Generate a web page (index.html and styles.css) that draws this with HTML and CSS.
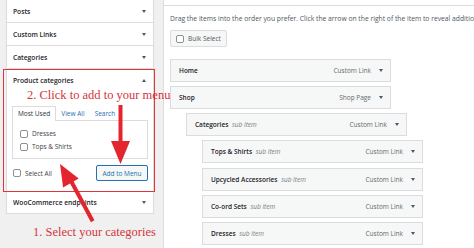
FILE: index.html
```
<!DOCTYPE html>
<html>
<head>
<meta charset="utf-8">
<link rel="stylesheet" href="styles.css">
</head>
<body>
<div class="page">
  <aside class="sidebar">
    <div class="acc-row"><span>Posts</span><i class="caret down"></i></div>
    <div class="acc-row"><span>Custom Links</span><i class="caret down"></i></div>
    <div class="acc-row"><span>Categories</span><i class="caret down"></i></div>
    <section class="acc-open">
      <div class="acc-head"><span>Product categories</span><i class="caret up"></i></div>
      <div class="acc-body">
        <div class="tabs">
          <span class="tab active">Most Used</span>
          <span class="tab link">View All</span>
          <span class="tab link">Search</span>
        </div>
        <div class="tab-panel">
          <label class="check-row"><span class="box"></span>Dresses</label>
          <label class="check-row"><span class="box"></span>Tops &amp; Shirts</label>
        </div>
        <div class="actions">
          <label class="check-row select-all"><span class="box"></span>Select All</label>
          <span class="add-btn">Add to Menu</span>
        </div>
      </div>
    </section>
    <div class="acc-row last"><span>WooCommerce endpoints</span><i class="caret down"></i></div>
  </aside>
  <main class="main">
    <div class="main-head"></div>
    <div class="main-body">
      <p class="hint">Drag the items into the order you prefer. Click the arrow on the right of the item to reveal additional configuration options.</p>
      <span class="bulk"><span class="box"></span>Bulk Select</span>
      <ul class="menu">
        <li class="item"><span class="title">Home</span><span class="meta">Custom Link<i class="caret down"></i></span></li>
        <li class="item"><span class="title">Shop</span><span class="meta">Shop Page<i class="caret down"></i></span></li>
        <li class="item d1"><span class="title">Categories <em>sub item</em></span><span class="meta">Custom Link<i class="caret down"></i></span></li>
        <li class="item d2"><span class="title">Tops &amp; Shirts <em>sub item</em></span><span class="meta">Custom Link<i class="caret down"></i></span></li>
        <li class="item d2"><span class="title">Upcycled Accessories <em>sub item</em></span><span class="meta">Custom Link<i class="caret down"></i></span></li>
        <li class="item d2"><span class="title">Co-ord Sets <em>sub item</em></span><span class="meta">Custom Link<i class="caret down"></i></span></li>
        <li class="item d2"><span class="title">Dresses <em>sub item</em></span><span class="meta">Custom Link<i class="caret down"></i></span></li>
      </ul>
    </div>
  </main>
</div>

<div class="annot annot-2">2. Click to add to your menu</div>
<div class="annot annot-1">1. Select your categories</div>
<svg class="arrows" width="474" height="248" viewBox="0 0 474 248">
  <rect x="118.5" y="105" width="4" height="38" fill="#e3262d"/>
  <polygon points="111,141 130,141 120.5,164" fill="#e3262d"/>
  <line x1="70.5" y1="180" x2="92.7" y2="221.3" stroke="#e3262d" stroke-width="4"/>
  <polygon points="60,164 78.7,178.6 63.1,187.6" fill="#e3262d"/>
</svg>
</body>
</html>
```

FILE: styles.css
```
* { box-sizing: border-box; }
html, body { margin: 0; padding: 0; }
body {
  width: 474px;
  height: 248px;
  overflow: hidden;
  position: relative;
  background: #f0f0f1;
  font-family: "Open Sans", "DejaVu Sans", sans-serif;
  color: #1d2327;
}
.page { display: flex; align-items: flex-start; height: 248px; }

/* sidebar */
.sidebar {
  flex: none;
  margin-left: 6px;
  width: 148px;
  background: #fff;
  border: 1px solid #dcdcde;
  border-top: 0;
  white-space: nowrap;
}
.acc-row, .acc-head {
  height: 23px;
  display: flex;
  align-items: center;
  justify-content: space-between;
  padding: 0 7px 0 6px;
  font-size: 6.7px;
  font-weight: 600;
  color: #1d2327;
  border-bottom: 1px solid #dcdcde;
}
.acc-head { border-bottom: 0; }
.acc-row.last { height: 21px; border-bottom: 0; }
.caret {
  display: inline-block;
  width: 0; height: 0;
  border-left: 2.3px solid transparent;
  border-right: 2.3px solid transparent;
}
.caret.down { border-top: 3px solid #50575e; }
.caret.up { border-bottom: 3px solid #50575e; }

.acc-open { position: relative; height: 123px; border-bottom: 1px solid #dcdcde; }
.acc-open::after {
  content: "";
  position: absolute;
  left: -4px; right: -2px; top: 0; bottom: -1px;
  border: 1.5px solid #e0353b;
  pointer-events: none;
}
.acc-body { padding: 0 5px; }
.tabs { display: flex; align-items: flex-end; margin-top: 14px; height: 14px; font-size: 6.5px; }
.tab { padding: 0 5px; line-height: 13px; }
.tab.active {
  background: #fff;
  border: 1px solid #dcdcde;
  border-bottom: 0;
  height: 15px;
  margin-bottom: -1px;
  position: relative;
  color: #2c3338;
}
.tab.link { color: #2271b1; padding: 0 5px 0 5px; }
.tab-panel {
  height: 39px;
  border: 1px solid #dcdcde;
  padding: 6px 0 0 7px;
}
.check-row {
  display: flex;
  align-items: center;
  height: 13px;
  font-size: 6.5px;
  color: #3c434a;
}
.box {
  display: inline-block;
  width: 8px; height: 8px;
  border: 1px solid #8c8f94;
  border-radius: 2px;
  background: #fff;
  margin-right: 4px;
  flex: none;
}
.actions {
  display: flex;
  justify-content: space-between;
  align-items: center;
  margin-top: 6px;
  height: 16px;
}
.select-all { padding-left: 1px; }
.add-btn {
  display: flex;
  align-items: center;
  justify-content: center;
  width: 52px;
  height: 16px;
  border: 1px solid #2271b1;
  border-radius: 2px;
  background: #f6f7f7;
  color: #2271b1;
  font-size: 6.5px;
}

/* main */
.main {
  margin-left: 9px;
  flex: 1;
  min-width: 0;
  align-self: stretch;
  background: #fff;
  border-left: 1px solid #dcdcde;
  overflow: hidden;
}
.main-head { height: 6px; border-bottom: 1px solid #dcdcde; }
.main-body { padding-left: 6px; }
.hint {
  margin: 8px 0 0;
  line-height: 10px;
  font-size: 6.75px;
  color: #50575e;
  white-space: nowrap;
}
.bulk {
  display: inline-flex;
  align-items: center;
  margin-top: 6px;
  width: 57px;
  height: 17px;
  padding-left: 5px;
  background: #f6f7f7;
  border: 1px solid #dcdcde;
  border-radius: 2px;
  font-size: 6.5px;
  color: #50575e;
  white-space: nowrap;
}
.menu { list-style: none; margin: 11px 0 0; padding: 0; }
.item {
  display: flex;
  align-items: center;
  justify-content: space-between;
  width: 221px;
  height: 23px;
  margin-bottom: 4.33px;
  padding: 0 7px 0 8px;
  background: #f6f7f7;
  border: 1px solid #dcdcde;
  font-size: 6.5px;
  white-space: nowrap;
}
.item.d1 { margin-left: 16px; }
.item.d2 { margin-left: 32px; }
.title { font-weight: 600; color: #1d2327; }
.title em { font-weight: 400; color: #787c82; margin-left: 2px; }
.meta { display: flex; align-items: center; color: #646970; }
.meta .caret { margin-left: 8px; }

/* annotations */
.annot {
  position: absolute;
  font-family: "Liberation Serif", "Times New Roman", serif;
  font-size: 12.5px;
  line-height: 1;
  color: #d5343b;
  white-space: nowrap;
}
.annot-2 { left: 27px; top: 88.5px; }
.annot-1 { left: 33px; top: 225.8px; }
.arrows { position: absolute; left: 0; top: 0; pointer-events: none; }
```
